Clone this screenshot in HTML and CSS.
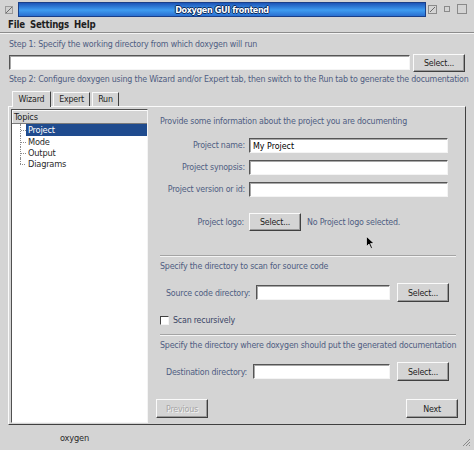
FILE: index.html
```html
<!DOCTYPE html>
<html>
<head>
    <meta charset="utf-8">
    <title>Doxygen GUI frontend</title>
    <link rel="stylesheet" href="styles.css">
</head>
<body>
<div class="window">
    <div class="titlebar">
        <div class="win-icon">
            <svg width="8" height="8" viewBox="0 0 8 8"><rect x="0.5" y="0.5" width="7" height="7" fill="#cfcfcf" stroke="#9a9a9a"/><path d="M1 7 L7 1" stroke="#6a6a6a"/></svg>
        </div>
        <div class="title">Doxygen GUI frontend</div>
        <div class="win-buttons">
            <svg width="9" height="9" viewBox="0 0 9 9"><rect x="0.5" y="0.5" width="8" height="8" fill="none" stroke="#8a8a8a"/><path d="M2 7 L7 2" stroke="#6a6a6a"/></svg>
            <svg width="6" height="6" viewBox="0 0 6 6"><rect x="0.5" y="0.5" width="5" height="5" fill="none" stroke="#8a8a8a"/></svg>
            <svg width="10" height="10" viewBox="0 0 10 10"><rect x="0.5" y="0.5" width="9" height="9" fill="none" stroke="#8a8a8a"/></svg>
        </div>
    </div>

    <div class="menubar">
        <span>File</span>
        <span>Settings</span>
        <span>Help</span>
    </div>

    <div class="main">
        <div class="step">Step 1: Specify the working directory from which doxygen will run</div>
        <div class="dir-row">
            <input class="field" type="text" value="">
            <button class="btn">Select...</button>
        </div>
        <div class="step">Step 2: Configure doxygen using the Wizard and/or Expert tab, then switch to the Run tab to generate the documentation</div>

        <div class="tabs">
            <span class="tab active">Wizard</span>
            <span class="tab">Expert</span>
            <span class="tab">Run</span>
        </div>
        <div class="tabpane">
            <div class="tree">
                <div class="tree-header">Topics</div>
                <div class="tree-items">
                    <div class="tree-item selected"><span class="branch"></span><span class="label">Project</span></div>
                    <div class="tree-item"><span class="branch"></span><span class="label">Mode</span></div>
                    <div class="tree-item"><span class="branch"></span><span class="label">Output</span></div>
                    <div class="tree-item last"><span class="branch"></span><span class="label">Diagrams</span></div>
                </div>
            </div>

            <div class="page">
                <div class="section-text">Provide some information about the project you are documenting</div>
                <div class="project-form">
                    <label>Project name:</label>
                    <input class="field" type="text" value="My Project">
                    <label>Project synopsis:</label>
                    <input class="field" type="text" value="">
                    <label>Project version or id:</label>
                    <input class="field" type="text" value="">
                </div>
                <div class="logo-row">
                    <label>Project logo:</label>
                    <button class="btn">Select...</button>
                    <span class="logo-note">No Project logo selected.</span>
                </div>

                <div class="separator sep-source"></div>
                <div class="section-text sub">Specify the directory to scan for source code</div>
                <div class="path-row">
                    <label>Source code directory:</label>
                    <input class="field" type="text" value="">
                    <button class="btn">Select...</button>
                </div>
                <div class="check-row">
                    <span class="checkbox"></span>
                    <span>Scan recursively</span>
                </div>

                <div class="separator sep-dest"></div>
                <div class="section-text sub">Specify the directory where doxygen should put the generated documentation</div>
                <div class="path-row">
                    <label>Destination directory:</label>
                    <input class="field" type="text" value="">
                    <button class="btn">Select...</button>
                </div>

                <div class="nav-row">
                    <button class="btn" disabled>Previous</button>
                    <button class="btn">Next</button>
                </div>
            </div>
        </div>
    </div>

    <div class="statusbar">
        <span>oxygen</span>
        <svg class="grip" width="9" height="9" viewBox="0 0 9 9">
            <path d="M8 1 L1 8 M8 4 L4 8 M8 7 L7 8" stroke="#8a8a8a" stroke-width="1"/>
        </svg>
    </div>

    <svg class="cursor" width="9" height="13" viewBox="0 0 9 13">
        <path d="M0.5 0.5 L0.5 10.5 L3 8 L5 12.5 L6.5 12 L4.5 7.5 L8 7.5 Z" fill="#000" stroke="#fff" stroke-width="0.6"/>
    </svg>
</div>
</body>
</html>
```

FILE: styles.css
```css
* {
    box-sizing: border-box;
}

body {
    margin: 0;
    background: #d4d4d4;
    font-family: "DejaVu Sans Condensed", "Liberation Sans", sans-serif;
    font-size: 8.8px;
    letter-spacing: -0.2px;
    color: #4f5d82;
}

.window {
    position: relative;
    width: 474px;
    height: 450px;
    display: flex;
    flex-direction: column;
    overflow: hidden;
}

/* title bar */
.titlebar {
    height: 17px;
    display: flex;
    align-items: center;
}
.win-icon {
    width: 18px;
    display: flex;
    justify-content: center;
    padding-top: 2px;
}
.title {
    flex: 1;
    height: 15px;
    line-height: 14px;
    margin-top: 1px;
    text-align: center;
    color: #fff;
    font-size: 9px;
    font-weight: bold;
    letter-spacing: -0.4px;
    text-shadow: 1px 0 #0d2a5c, -1px 0 #0d2a5c, 0 1px #0d2a5c, 0 -1px #0d2a5c;
    background: linear-gradient(#1d55b8, #3f9cf0 55%, #2a6fd0);
    border: 1px solid #1a3f88;
}
.win-buttons {
    width: 48px;
    display: flex;
    align-items: center;
    justify-content: space-between;
    padding: 1px 7px 0 2px;
}

/* menu */
.menubar {
    height: 16px;
    display: flex;
    align-items: center;
    gap: 5px;
    padding-left: 8px;
    font-size: 9.6px;
    font-weight: bold;
    color: #1e1e1e;
    border-bottom: 1px solid #8c8c8c;
    box-shadow: 0 1px 0 #f4f4f4;
}

.main {
    padding: 0 8px;
}

.step {
    height: 12px;
    line-height: 12px;
    padding-left: 1px;
    white-space: nowrap;
}
.main > .step:first-child {
    margin-top: 5px;
}

.dir-row {
    display: flex;
    align-items: center;
    gap: 3px;
    height: 17px;
    margin: 4px 0 2px;
    padding: 0 1px;
}
.dir-row .field {
    flex: 1;
}

/* widgets */
.field {
    height: 15px;
    padding: 0 3px;
    font: inherit;
    color: #000;
    background: #fff;
    border: 1px solid;
    border-color: #555 #f4f4f4 #f4f4f4 #555;
    box-shadow: inset 1px 1px 0 #a8a8a8;
    outline: none;
}

.btn {
    width: 52px;
    height: 18px;
    padding: 0;
    font: inherit;
    letter-spacing: inherit;
    color: #1e1e1e;
    background: #d4d4d4;
    border: 1px solid;
    border-color: #fafafa #404040 #404040 #fafafa;
    box-shadow: inset -1px -1px 0 #9a9a9a;
}
.btn:disabled {
    color: #a6a6a6;
    text-shadow: 1px 1px 0 #f4f4f4;
}

/* tabs */
.tabs {
    display: flex;
    align-items: flex-end;
    gap: 2px;
    height: 16px;
    margin-top: 5px;
    padding-left: 4px;
}
.tab {
    height: 14px;
    line-height: 13px;
    padding: 0;
    text-align: center;
    color: #1e1e1e;
    border-top: 1px solid #fafafa;
    border-left: 1px solid #fafafa;
    border-right: 1px solid #404040;
}
.tab.active {
    height: 16px;
    line-height: 14px;
    width: 39px;
    margin-bottom: -1px;
    position: relative;
    background: #d4d4d4;
}
.tab:nth-child(2) {
    width: 37px;
}
.tab:nth-child(3) {
    width: 27px;
}

.tabpane {
    height: 319px;
    display: flex;
    padding: 2px 0 1px 2px;
    border: 1px solid;
    border-color: #fafafa #404040 #404040 #fafafa;
}

/* topic tree */
.tree {
    flex: 0 0 137px;
    background: #fff;
    border: 1px solid;
    border-color: #505050 #f4f4f4 #f4f4f4 #505050;
    color: #2a2a2a;
    font-size: 9.2px;
}
.tree-header {
    height: 14px;
    line-height: 13px;
    padding-left: 2px;
    background: #d4d4d4;
    color: #1e1e1e;
    border-bottom: 1px solid #7a7a7a;
    box-shadow: inset 1px 1px 0 #fafafa;
}
.tree-item {
    position: relative;
    display: flex;
    height: 11px;
    line-height: 11px;
}
.tree-item:first-child {
    height: 12px;
    line-height: 12px;
}
.tree-item .branch {
    width: 6px;
    margin-left: 8px;
    border-left: 1px dotted #8a8a8a;
    position: relative;
}
.tree-item .branch::after {
    content: "";
    position: absolute;
    left: 0;
    top: 50%;
    width: 5px;
    border-top: 1px dotted #8a8a8a;
}
.tree-item.last .branch {
    border-left: none;
}
.tree-item.last .branch::before {
    content: "";
    position: absolute;
    left: 0;
    top: 0;
    height: 50%;
    border-left: 1px dotted #8a8a8a;
}
.tree-item .label {
    flex: 1;
    padding-left: 2px;
}
.tree-item.selected .label {
    background: #1f4b8e;
    color: #fff;
}

/* wizard page */
.page {
    flex: 1;
    min-width: 0;
    display: flex;
    flex-direction: column;
    padding-top: 6px;
}
.section-text {
    height: 12px;
    line-height: 12px;
    padding-left: 12px;
    white-space: nowrap;
}
.section-text.sub {
    margin-top: 3px;
}

.project-form {
    display: grid;
    grid-template-columns: 97px 199px;
    grid-auto-rows: 15px;
    column-gap: 4px;
    row-gap: 7px;
    margin-top: 11px;
}
.project-form label,
.logo-row label {
    text-align: right;
    line-height: 15px;
    white-space: nowrap;
}

.logo-row {
    display: grid;
    grid-template-columns: 96px 52px auto;
    column-gap: 5px;
    align-items: center;
    height: 18px;
    margin-top: 16px;
}
.logo-note {
    padding-left: 1px;
}

.separator {
    height: 2px;
    margin: 0 9px 0 12px;
    border-top: 1px solid #a4a4a4;
    border-bottom: 1px solid #f4f4f4;
}
.sep-source {
    margin-top: 24px;
}
.sep-dest {
    margin-top: 8px;
}

.path-row {
    display: flex;
    align-items: center;
    height: 19px;
    margin-top: 11px;
    padding: 0 16px 0 18px;
}
.path-row label {
    white-space: nowrap;
    margin-right: 6px;
}
.path-row .field {
    flex: 1;
    min-width: 0;
    margin-right: 7px;
}
.path-row .btn {
    height: 19px;
}

.check-row {
    display: flex;
    align-items: center;
    gap: 4px;
    height: 12px;
    margin-top: 12px;
    padding-left: 12px;
    color: #3a4566;
}
.checkbox {
    width: 9px;
    height: 9px;
    background: #fff;
    border: 1px solid;
    border-color: #404040 #f4f4f4 #f4f4f4 #404040;
}

.nav-row {
    display: flex;
    justify-content: space-between;
    margin-top: 18px;
    padding: 0 7px 0 8px;
}
.nav-row .btn {
    height: 19px;
}

/* status bar */
.statusbar {
    flex: 1;
    position: relative;
    display: flex;
    align-items: center;
    padding-left: 60px;
    color: #2a2a2a;
    font-size: 9.2px;
}
.grip {
    position: absolute;
    right: 3px;
    bottom: 3px;
}

.cursor {
    position: absolute;
    left: 366px;
    top: 236px;
}
```
